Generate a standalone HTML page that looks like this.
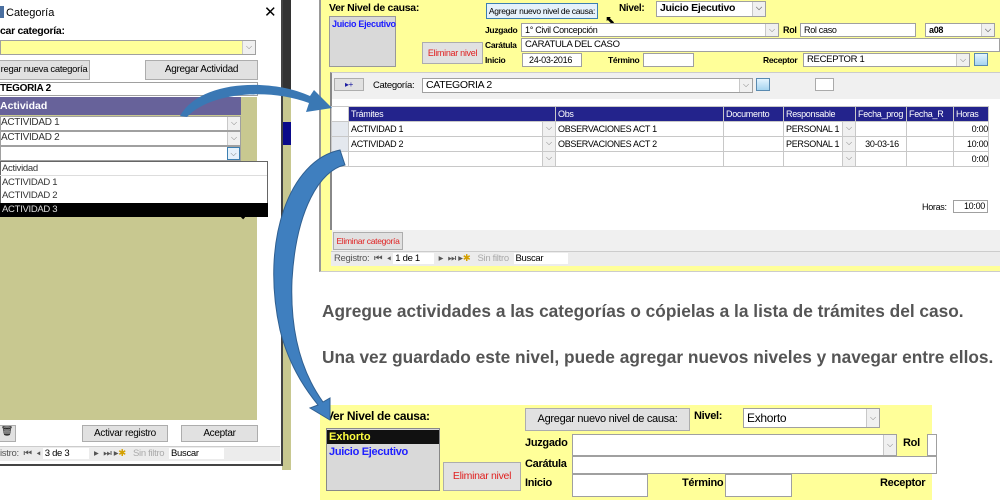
<!DOCTYPE html>
<html><head><meta charset="utf-8"><style>
*{margin:0;padding:0;box-sizing:border-box}
body{width:1000px;height:500px;background:#fff;position:relative;overflow:hidden;font-family:"Liberation Sans",sans-serif;font-size:10px;color:#000}
.a{position:absolute;white-space:nowrap}
.s{letter-spacing:-0.3px}
.f{position:absolute;background:#fff;border:1px solid #a0a0a0;padding-left:3px;line-height:12px;font-size:10px;overflow:hidden;white-space:nowrap;letter-spacing:-0.3px}
.btn{position:absolute;background:#e1e1e1;border:1px solid #adadad;text-align:center;font-size:10px;white-space:nowrap;overflow:hidden;letter-spacing:-0.3px}
.dd{position:absolute;width:13px;top:0;bottom:0;right:0;background:#f0f0f0;border-left:1px solid #c8c8c8;color:#777;font-size:8px;text-align:center;line-height:12px;letter-spacing:0}
.b{font-weight:bold}
.bs{position:absolute;width:14px;height:13px;background:linear-gradient(#e4f4ff,#a6d4f0);border:1px solid #5a8ab0}
.g td{border:1px solid #c8c8c8;height:15px;font-size:9px;padding-left:2px;position:relative;white-space:nowrap;overflow:hidden;letter-spacing:-0.3px}
</style></head><body>

<div class="a" style="left:282px;top:0;width:9px;height:470px;background:#c8c890"></div>
<div class="a" style="left:282px;top:0;width:9px;height:95px;background:#333"></div>
<div class="a" style="left:282px;top:122px;width:9px;height:23px;background:#0a0a8a"></div>

<div class="a" style="left:0;top:0;width:283px;height:466px;background:#fff;border-right:2px solid #444;border-bottom:2px solid #444"></div>
<div class="a" style="left:0;top:6px;width:4px;height:12px;background:#4a6fa0"></div>
<div class="a" style="left:6px;top:7px;font-size:11px">Categoría</div>
<div class="a" style="left:264px;top:3px;font-size:15px">✕</div>
<div class="a b s" style="left:0;top:25px;font-size:10.5px">car categoría:</div>
<div class="f" style="left:0;top:40px;width:256px;height:15px;background:#ffff99"><div class="dd">⌵</div></div>
<div class="btn" style="left:-2px;top:60px;width:92px;height:20px;line-height:18px;font-size:9.5px">regar nueva categoría</div>
<div class="btn" style="left:145px;top:60px;width:113px;height:20px;line-height:18px">Agregar Actividad</div>
<div class="f b" style="left:-1px;top:82px;width:259px;height:14px;padding-left:0">TEGORIA 2</div>
<div class="a" style="left:0;top:97px;width:257px;height:323px;background:#c8c890"></div>
<div class="a b" style="left:0;top:97px;width:241px;height:18px;background:#67629a;color:#fff;line-height:18px;font-size:10.5px">Actividad</div>
<div class="f" style="left:0;top:116px;width:241px;height:15px;padding-left:0;color:#333">ACTIVIDAD 1<div class="dd">⌵</div></div>
<div class="f" style="left:0;top:131px;width:241px;height:15px;padding-left:0;color:#333">ACTIVIDAD 2<div class="dd">⌵</div></div>
<div class="f" style="left:0;top:146px;width:241px;height:15px"><div class="dd" style="border:1px solid #3c7fb1;background:#e5f1fb">⌵</div></div>
<div class="a" style="left:0;top:161px;width:268px;height:56px;background:#fff;border:1px solid #666"></div>
<div class="a s" style="left:2px;top:163px;color:#333;font-size:9.5px">Actividad</div>
<div class="a" style="left:0;top:175px;width:267px;border-top:1px solid #ddd"></div>
<div class="a s" style="left:2px;top:177px;color:#333;font-size:9.5px">ACTIVIDAD 1</div>
<div class="a s" style="left:2px;top:190px;color:#333;font-size:9.5px">ACTIVIDAD 2</div>
<div class="a s" style="left:0;top:203px;width:268px;height:14px;background:#000;color:#ddd;padding-left:2px;font-size:9.5px;line-height:13px">ACTIVIDAD 3</div>
<div class="a" style="left:236px;top:208px;font-size:12px">⬉</div>
<div class="btn" style="left:-2px;top:425px;width:18px;height:17px">🗑</div>
<div class="btn" style="left:82px;top:425px;width:86px;height:17px;line-height:15px">Activar registro</div>
<div class="btn" style="left:181px;top:425px;width:77px;height:17px;line-height:15px">Aceptar</div>
<div class="a s" style="left:0;top:446px;width:280px;height:15px;background:#ececec;border-top:1px solid #ccc;font-size:9.5px;color:#555;line-height:14px">istro: &nbsp;⏮ &nbsp;◂ <span style="background:#fff;color:#000;padding:0 20px 0 2px">3 de 3</span> &nbsp;▸ &nbsp;⏭ ▸<span style="color:#d4a000">✱</span> &nbsp; <span style="color:#aaa">Sin filtro</span> &nbsp;<span style="background:#fff;color:#000;padding:0 25px 0 2px">Buscar</span></div>

<div class="a" style="left:319px;top:0;width:681px;height:272px;background:#ffff99;border-left:2px solid #999;border-bottom:1px solid #ccc"></div>
<div class="a b s" style="left:329px;top:2px;font-size:10.5px">Ver Nivel de causa:</div>
<div class="a" style="left:329px;top:16px;width:67px;height:51px;background:#d9d9d9;border:1px solid #999"></div>
<div class="a b s" style="left:332px;top:19px;color:#1b1bff;font-size:9px">Juicio Ejecutivo</div>
<div class="btn" style="left:422px;top:42px;width:61px;height:22px;line-height:20px;color:#e02020;font-size:9px">Eliminar nivel</div>
<div class="btn" style="left:486px;top:3px;width:112px;height:16px;line-height:14px;background:#e5f1fb;border-color:#3c7fb1;font-size:8.5px">Agregar nuevo nivel de causa:</div>
<div class="a" style="left:605px;top:13px;font-size:12px">⬉</div>
<div class="a b s" style="left:619px;top:3px;font-size:10px">Nivel:</div>
<div class="f b" style="left:656px;top:1px;width:110px;height:16px;font-size:10.5px">Juicio Ejecutivo<div class="dd">⌵</div></div>
<div class="a b s" style="left:485px;top:25px;font-size:8.5px">Juzgado</div>
<div class="f" style="left:521px;top:23px;width:258px;height:14px;font-size:9px">1° Civil Concepción<div class="dd">⌵</div></div>
<div class="a b s" style="left:783px;top:25px;font-size:9px">Rol</div>
<div class="f" style="left:800px;top:23px;width:116px;height:14px;font-size:9px">Rol caso</div>
<div class="f b" style="left:925px;top:23px;width:70px;height:14px;font-size:9px">a08<div class="dd">⌵</div></div>
<div class="a b s" style="left:485px;top:40px;font-size:8.5px">Carátula</div>
<div class="f" style="left:521px;top:38px;width:479px;height:14px;font-size:9.5px">CARATULA DEL CASO</div>
<div class="a b s" style="left:485px;top:55px;font-size:8.5px">Inicio</div>
<div class="f" style="left:522px;top:53px;width:60px;height:14px;font-size:9px;padding-left:6px">24-03-2016</div>
<div class="a b s" style="left:608px;top:55px;font-size:8.5px">Término</div>
<div class="f" style="left:643px;top:53px;width:51px;height:14px"></div>
<div class="a b s" style="left:763px;top:55px;font-size:8.5px">Receptor</div>
<div class="f" style="left:803px;top:53px;width:167px;height:14px;font-size:9.5px">RECEPTOR 1<div class="dd">⌵</div></div>
<div class="bs" style="left:974px;top:53px"></div>

<div class="a" style="left:330px;top:72px;width:670px;height:158px;background:#fff;border-left:2px solid #888;border-top:1px solid #ccc"></div>
<div class="a" style="left:332px;top:73px;width:668px;height:26px;background:#f0f0f0"></div>
<div class="btn" style="left:334px;top:78px;width:30px;height:13px;line-height:11px;color:#1a1aa0;font-size:8px">▸+</div>
<div class="a s" style="left:373px;top:80px;font-size:9.5px">Categoría:</div>
<div class="f" style="left:422px;top:78px;width:331px;height:15px;font-size:10.5px;line-height:13px">CATEGORIA 2<div class="dd">⌵</div></div>
<div class="bs" style="left:756px;top:78px"></div>
<div class="a" style="left:815px;top:78px;width:19px;height:13px;background:#fff;border:1px solid #aaa"></div>
<table class="a g" style="left:331px;top:106px;border-collapse:collapse;table-layout:fixed;width:657px">
<colgroup><col style="width:17px"><col style="width:207px"><col style="width:168px"><col style="width:60px"><col style="width:72px"><col style="width:51px"><col style="width:47px"><col style="width:35px"></colgroup>
<tr style="background:#23238c;color:#fff"><td style="background:#fff"></td><td>Trámites</td><td>Obs</td><td>Documento</td><td>Responsable</td><td>Fecha_prog</td><td>Fecha_R</td><td>Horas</td></tr>
<tr><td style="background:#e4e8ee"></td><td>ACTIVIDAD 1<div class="dd">⌵</div></td><td>OBSERVACIONES ACT 1</td><td></td><td>PERSONAL 1<div class="dd">⌵</div></td><td></td><td></td><td style="text-align:right">0:00</td></tr>
<tr><td style="background:#e4e8ee"></td><td>ACTIVIDAD 2<div class="dd">⌵</div></td><td>OBSERVACIONES ACT 2</td><td></td><td>PERSONAL 1<div class="dd">⌵</div></td><td style="text-align:center">30-03-16</td><td></td><td style="text-align:right">10:00</td></tr>
<tr><td></td><td><div class="dd">⌵</div></td><td></td><td></td><td><div class="dd">⌵</div></td><td></td><td></td><td style="text-align:right">0:00</td></tr>
</table>
<div class="a s" style="left:922px;top:202px;font-size:9px">Horas:</div>
<div class="f" style="left:953px;top:200px;width:35px;height:13px;text-align:right;padding-right:2px;font-size:9px;line-height:11px">10:00</div>
<div class="a" style="left:332px;top:230px;width:668px;height:21px;background:#f0f0f0"></div>
<div class="btn" style="left:333px;top:232px;width:70px;height:18px;line-height:16px;color:#e02020;font-size:8.5px">Eliminar categoría</div>
<div class="a s" style="left:331px;top:251px;width:669px;height:15px;background:#ececec;border-top:1px solid #ccc;font-size:9.5px;color:#555;line-height:14px;padding-left:3px">Registro: &nbsp;⏮ &nbsp;◂ <span style="background:#fff;color:#000;padding:0 14px 0 2px">1 de 1</span> &nbsp;▸ &nbsp;⏭ ▸<span style="color:#d4a000">✱</span> &nbsp; <span style="color:#aaa">Sin filtro</span> &nbsp;<span style="background:#fff;color:#000;padding:0 25px 0 2px">Buscar</span></div>

<div class="a b" style="left:322px;top:301px;font-size:17.3px;color:#555">Agregue actividades a las categorías o cópielas a la lista de trámites del caso.</div>
<div class="a b" style="left:322px;top:347px;font-size:17.3px;color:#555">Una vez guardado este nivel, puede agregar nuevos niveles y navegar entre ellos.</div>

<div class="a" style="left:320px;top:405px;width:612px;height:95px;background:#ffff99"></div>
<div class="a b s" style="left:326px;top:409px;font-size:12px">Ver Nivel de causa:</div>
<div class="a" style="left:326px;top:428px;width:114px;height:63px;background:#d9d9d9;border:1px solid #888"></div>
<div class="a b" style="left:327px;top:430px;width:112px;height:14px;background:#111;color:#ffff40;font-size:11px;padding-left:2px;line-height:14px">Exhorto</div>
<div class="a b s" style="left:329px;top:446px;color:#2020ff;font-size:11px">Juicio Ejecutivo</div>
<div class="btn" style="left:443px;top:462px;width:78px;height:29px;line-height:27px;color:#e02020;font-size:10.5px">Eliminar nivel</div>
<div class="btn" style="left:525px;top:408px;width:165px;height:23px;line-height:21px;font-size:11px">Agregar nuevo nivel de causa:</div>
<div class="a b s" style="left:694px;top:410px;font-size:11px">Nivel:</div>
<div class="f" style="left:743px;top:408px;width:137px;height:20px;font-size:12px;line-height:18px">Exhorto<div class="dd" style="line-height:18px">⌵</div></div>
<div class="a b s" style="left:525px;top:437px;font-size:11px">Juzgado</div>
<div class="f" style="left:572px;top:434px;width:325px;height:22px"><div class="dd" style="line-height:20px">⌵</div></div>
<div class="a b s" style="left:903px;top:437px;font-size:11px">Rol</div>
<div class="f" style="left:927px;top:434px;width:10px;height:22px"></div>
<div class="a b s" style="left:525px;top:458px;font-size:11px">Carátula</div>
<div class="f" style="left:572px;top:456px;width:365px;height:18px"></div>
<div class="a b s" style="left:525px;top:477px;font-size:11px">Inicio</div>
<div class="f" style="left:572px;top:474px;width:76px;height:23px"></div>
<div class="a b s" style="left:682px;top:477px;font-size:11px">Término</div>
<div class="f" style="left:725px;top:474px;width:67px;height:23px"></div>
<div class="a b s" style="left:880px;top:477px;font-size:11px">Receptor</div>

<svg class="a" style="left:0;top:0" width="1000" height="500" viewBox="0 0 1000 500">
<path d="M180 116 C200 80 270 78 310 96 L314 90 L332 108 L306 112 L309 103 C270 88 210 92 187 117 Z" fill="#3a78b4"/>
<path d="M340 150 C290 160 260 240 280 330 C290 370 310 395 318 405 L310 408 L330 420 L330 398 L323 402 C300 370 290 330 292 280 C296 210 320 170 345 165 Z" fill="#3f7fbf" stroke="#2f5f90" stroke-width="1"/>
</svg>
</body></html>
